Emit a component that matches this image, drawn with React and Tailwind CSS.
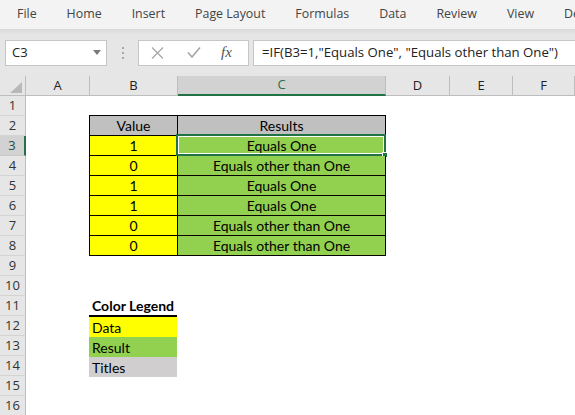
import React from 'react';

const TABS = ['File', 'Home', 'Insert', 'Page Layout', 'Formulas', 'Data', 'Review', 'View', 'Developer'];

const COLUMNS = [
  { id: 'A', w: 'w-[64px]' },
  { id: 'B', w: 'w-[88px]' },
  { id: 'C', w: 'w-[208px]', active: true },
  { id: 'D', w: 'w-[64px]' },
  { id: 'E', w: 'w-[63px]' },
  { id: 'F', w: 'flex-1' },
];

const DATA = [1, 0, 1, 1, 0, 0];

const ROWS = Array.from({ length: 16 }, (_, i) => i + 1);

const LEGEND = [
  { label: 'Data', bg: 'bg-[#ffff00]' },
  { label: 'Result', bg: 'bg-[#92d050]' },
  { label: 'Titles', bg: 'bg-[#d0cece]' },
];

const ui = { fontFamily: '"Open Sans", "Noto Sans", sans-serif' };
const cell = { fontFamily: 'Lato, "Open Sans", sans-serif' };

export default function App() {
  return (
    <div className="w-[575px] h-[415px] overflow-hidden bg-white flex flex-col" style={ui}>
      {/* ribbon tabs */}
      <div className="h-[29px] shrink-0 bg-[#f3f3f3] flex items-center pl-[17px] gap-[30px] text-[12.4px] text-[#444] whitespace-nowrap overflow-hidden">
        {TABS.map(t => (
          <span key={t} className="shrink-0">{t}</span>
        ))}
      </div>

      {/* formula bar */}
      <div className="h-[47px] shrink-0 bg-gradient-to-b from-[#d9d9d9] via-[#e6e6e6] via-[12%] to-[#e6e6e6] flex items-center pl-[5px] gap-0">
        <div className="w-[102px] h-[26px] bg-white border border-[#c6c6c6] flex items-center justify-between pl-[6px] pr-[5px] text-[13px] text-[#222]">
          <span>C3</span>
          <svg width="8" height="5" viewBox="0 0 8 5">
            <path d="M0 0h8L4 5z" fill="#7a7a7a" />
          </svg>
        </div>
        <div className="w-[31px] flex flex-col items-center gap-[3px]">
          <span className="w-[2px] h-[2px] bg-[#a8a8a8]" />
          <span className="w-[2px] h-[2px] bg-[#a8a8a8]" />
          <span className="w-[2px] h-[2px] bg-[#a8a8a8]" />
        </div>
        <div className="w-[111px] h-[26px] bg-white border border-[#c6c6c6] flex items-center pl-[12px]">
          <svg width="13" height="12" viewBox="0 0 13 12" className="mr-[23px]">
            <path d="M1 0.5l11 11M12 0.5l-11 11" stroke="#a6a6a6" strokeWidth="1.2" fill="none" />
          </svg>
          <svg width="14" height="11" viewBox="0 0 14 11" className="mr-[20px]">
            <path d="M1 5.5l4 4.5 8-9.5" stroke="#a6a6a6" strokeWidth="1.6" fill="none" />
          </svg>
          <span className="italic text-[15px] text-[#555]" style={{ fontFamily: '"Liberation Serif", serif' }}>
            fx
          </span>
        </div>
        <div className="ml-[4px] flex-1 h-[26px] bg-white border border-r-0 border-[#c6c6c6] flex items-center pl-[8px] text-[13.2px] text-[#222] whitespace-nowrap overflow-hidden">
          =IF(B3=1,"Equals One", "Equals other than One")
        </div>
      </div>

      {/* column headers */}
      <div className="h-[20px] shrink-0 flex bg-[#e6e6e6] text-[13px] text-[#222]">
        <div className="w-[26px] h-full border-r border-b border-[#bdbdbd] flex items-end justify-end pr-[3px] pb-[2px]">
          <svg width="12" height="11" viewBox="0 0 12 11">
            <path d="M12 0V11H0z" fill="#b8b8b8" />
          </svg>
        </div>
        {COLUMNS.map(c => (
          <div
            key={c.id}
            className={
              c.active
                ? `${c.w} h-full bg-[#d2d2d2] border-r border-[#bdbdbd] border-b-2 border-b-[#217346] flex items-center justify-center text-[#217346]`
                : `${c.w} h-full border-r border-b border-[#bdbdbd] flex items-center justify-center`
            }
          >
            {c.id}
          </div>
        ))}
      </div>

      {/* sheet */}
      <div className="flex flex-1 min-h-0">
        <div className="w-[26px] shrink-0 flex flex-col bg-[#e6e6e6] text-[13px] text-[#333]">
          {ROWS.map(r => (
            <div
              key={r}
              className={
                r === 3
                  ? 'h-[20px] shrink-0 bg-[#d2d2d2] border-b border-[#c8c8c8] border-r-2 border-r-[#217346] flex items-center justify-center text-[#1f4e3d]'
                  : 'h-[20px] shrink-0 border-b border-[#d4d4d4] border-r border-r-[#bdbdbd] flex items-center justify-center'
              }
            >
              {r}
            </div>
          ))}
        </div>

        <div className="flex-1 pt-[19px] pl-[63px] text-[14px] text-black" style={cell}>
          {/* main table */}
          <div className="w-[297px] border-l border-t border-black">
            <div className="flex h-[20px] bg-[#c0c0c0]">
              <div className="w-[88px] border-r border-b border-black flex items-center justify-center">Value</div>
              <div className="w-[208px] border-r border-b border-black flex items-center justify-center">Results</div>
            </div>
            {DATA.map((v, i) => (
              <div key={i} className="flex h-[20px]">
                <div className="w-[88px] bg-[#ffff00] border-r border-b border-black flex items-center justify-center">
                  {v}
                </div>
                <div className="relative w-[208px] bg-[#92d050] border-r border-b border-black flex items-center justify-center">
                  {v === 1 ? 'Equals One' : 'Equals other than One'}
                  {i === 0 && (
                    <>
                      <div className="absolute -left-[2px] -top-[2px] -right-[1px] -bottom-[1px] border-2 border-[#217346] shadow-[inset_0_0_0_1px_#fff]" />
                      <div className="absolute -right-[3px] -bottom-[3px] w-[6px] h-[6px] bg-[#217346] border border-white" />
                    </>
                  )}
                </div>
              </div>
            ))}
          </div>

          {/* legend */}
          <div className="mt-[40px] w-[88px]">
            <div className="h-[21px] border-b-2 border-black flex items-center pl-[3px] font-bold">Color Legend</div>
            {LEGEND.map(l => (
              <div key={l.label} className={`h-[20px] ${l.bg} flex items-center pl-[3px]`}>
                {l.label}
              </div>
            ))}
          </div>
        </div>
      </div>
    </div>
  );
}
